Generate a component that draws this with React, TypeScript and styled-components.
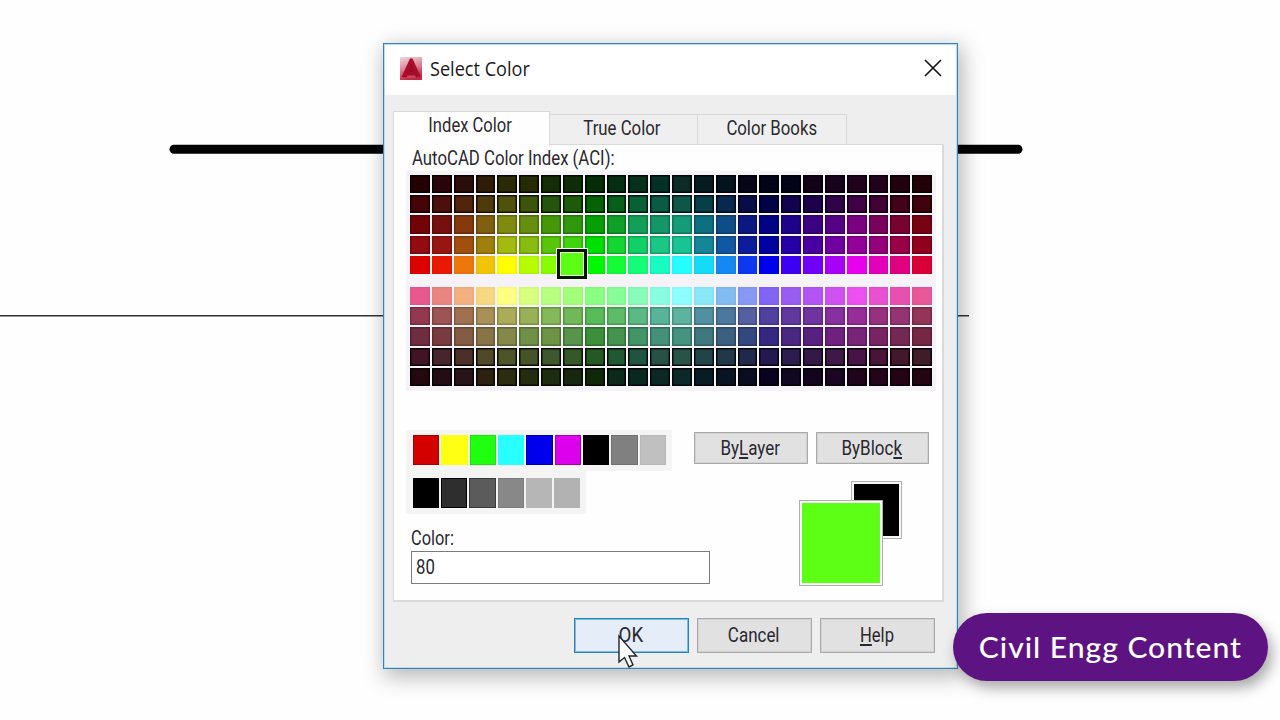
import React from "react";
import styled, { createGlobalStyle } from "styled-components";

const GlobalStyle = createGlobalStyle`
  *, *::before, *::after { box-sizing: border-box; }
  body { margin: 0; background: #fff; overflow: hidden; }
`;

const Desktop = styled.main`
  position: relative;
  width: 1280px;
  height: 720px;
  overflow: hidden;
  background: #fefefe;
  font-family: Roboto, "Liberation Sans", sans-serif;
  color: #2c2930;
`;

const Drawing = styled.svg`
  position: absolute;
  inset: 0;
`;

const Dialog = styled.section`
  position: absolute;
  left: 383px;
  top: 43px;
  width: 575px;
  height: 626px;
  display: flex;
  flex-direction: column;
  background: #eeeeee;
  border: 1px solid #3c82b4;
  box-shadow: inset 0 0 0 1px #b5dcf0, 3px 6px 20px 2px rgba(0, 0, 0, 0.28);
`;

const TitleBar = styled.header`
  display: flex;
  align-items: center;
  height: 50px;
  margin: 1px 1px 0;
  padding: 0 14px 3px 15px;
  background: #fff;
`;

const Text = styled.span<{ $scale: number; $origin?: string }>`
  display: inline-block;
  white-space: nowrap;
  transform: scaleX(${(p) => p.$scale});
  transform-origin: ${(p) => p.$origin ?? "center"};
`;

const Title = styled.h1`
  flex: 1;
  margin: 0 0 0 7px;
  font: 400 20px/28px "Open Sans", "Noto Sans", sans-serif;
  color: #1c1a20;
`;

const CloseIcon = styled.svg`
  margin-bottom: 1px;
`;

const TabStrip = styled.nav`
  display: flex;
  align-items: flex-end;
  height: 34px;
  margin: 15px 0 0 9px;
`;

const Tab = styled.div<{ $active?: boolean; $width: number; $nudge?: number }>`
  position: relative;
  z-index: ${(p) => (p.$active ? 1 : 0)};
  display: flex;
  justify-content: center;
  width: ${(p) => p.$width}px;
  height: ${(p) => (p.$active ? 35 : 30)}px;
  margin-bottom: ${(p) => (p.$active ? -2 : 0)}px;
  padding-top: 1px;
  padding-right: ${(p) => p.$nudge ?? 2}px;
  font-size: 19.5px;
  line-height: 26px;
  background: ${(p) => (p.$active ? "#fefefe" : "#efefef")};
  border: 1px solid #d9d9d9;
  border-bottom: 0;
  border-left-width: ${(p) => (p.$active ? 1 : 0)}px;
`;

const Panel = styled.div`
  display: flex;
  flex-direction: column;
  width: 551px;
  height: 458px;
  margin-left: 9px;
  padding: 0 6px 0 12px;
  background: #fefefe;
  border: 1px solid #dadada;
  border-right-width: 2px;
  border-bottom-width: 2px;
`;

const Caption = styled.div`
  height: 26px;
  padding-left: 6px;
  font-size: 19.5px;
  line-height: 27px;
`;

const Palettes = styled.div`
  display: flex;
  flex-direction: column;
  gap: 13px;
  width: 530px;
  height: 220px;
  padding: 4px 4px 4px;
  background: #f5f3f7;
`;

const Palette = styled.div`
  display: grid;
  grid-template-columns: repeat(24, 1fr);
  grid-template-rows: repeat(5, 1fr);
  gap: 2px;
  height: 99px;
`;

const Cell = styled.div<{ $color: string; $edge: string }>`
  position: relative;
  background: ${(p) => p.$color};
  box-shadow: inset 0 0 0 1.5px ${(p) => p.$edge};
`;

const Selection = styled.div`
  position: absolute;
  z-index: 2;
  left: -6px;
  top: -7px;
  width: 30px;
  height: 30px;
  border: 3px solid #0a120a;
  background: #5cff14;
  box-shadow: 0 0 0 1px #f2fff0, inset 0 0 0 1px #e4ffd8;
`;

const Middle = styled.div`
  display: flex;
  justify-content: space-between;
  height: 84px;
  margin-top: 39px;
  padding-right: 7px;
`;

const SwatchRow = styled.div<{ $wide?: boolean }>`
  display: flex;
  gap: 2px;
  width: ${(p) => (p.$wide ? 266 : 180)}px;
  height: ${(p) => (p.$wide ? 41 : 43)}px;
  padding: ${(p) => (p.$wide ? 5 : 7)}px 6px 5px 7px;
  background: #f4f4f4;
`;

const Swatch = styled.div<{ $color: string; $edge?: string }>`
  flex: 1;
  height: 30px;
  background: ${(p) => p.$color};
  border: 1px solid ${(p) => p.$edge ?? p.$color};
`;

const LayerButtons = styled.div`
  display: flex;
  gap: 8px;
  padding-top: 2px;
`;

const Button = styled.button<{ $w: number; $h: number; $primary?: boolean }>`
  display: flex;
  align-items: center;
  justify-content: center;
  width: ${(p) => p.$w}px;
  height: ${(p) => p.$h}px;
  padding: 1px 1px 0 0;
  font: 400 19.5px/26px Roboto, "Liberation Sans", sans-serif;
  color: #2a2730;
  background: ${(p) => (p.$primary ? "#e4edf8" : "#e1e1e1")};
  border: 1px solid ${(p) => (p.$primary ? "#2484c4" : "#a9a9a9")};
  box-shadow: inset 0 0 0 1px ${(p) => (p.$primary ? "#7dbbe2" : "#d2d2d2")};
  border-radius: 0;

  u { text-underline-offset: 2px; text-decoration-thickness: 1.5px; }
`;

const Lower = styled.div`
  display: flex;
  justify-content: space-between;
  align-items: flex-start;
  padding-right: 34px;
`;

const Field = styled.label`
  display: flex;
  flex-direction: column;
  padding: 12px 0 0 5px;
  font-size: 19.5px;
  line-height: 25px;
`;

const Value = styled.div`
  width: 299px;
  height: 33px;
  padding: 1px 0 0 4px;
  line-height: 29px;
  background: #fff;
  border: 1.5px solid #7c7c7c;
`;

const Preview = styled.div`
  display: grid;
  width: 103px;
  height: 105px;
  margin-top: -33px;
`;

const Chip = styled.div<{ $color: string; $front?: boolean }>`
  grid-area: 1 / 1;
  align-self: ${(p) => (p.$front ? "end" : "start")};
  justify-self: ${(p) => (p.$front ? "start" : "end")};
  width: ${(p) => (p.$front ? 84 : 51)}px;
  height: ${(p) => (p.$front ? 86 : 58)}px;
  padding: 2px;
  background: ${(p) => p.$color};
  background-clip: content-box;
  border: 1px solid #b0b0b0;
  box-shadow: inset 0 0 0 2px #f7f7f7;
`;

const Footer = styled.footer`
  display: flex;
  justify-content: flex-end;
  gap: 8px;
  padding: 16px 22px 0 0;
`;

const Badge = styled.div`
  position: absolute;
  left: 953px;
  top: 613px;
  width: 315px;
  height: 68px;
  display: flex;
  align-items: center;
  justify-content: center;
  border-radius: 34px;
  background: #5e1382;
  color: #fff;
  font: 500 28px/36px Lato, sans-serif;
  letter-spacing: 0.9px;
  box-shadow: 4px 7px 14px rgba(0, 0, 0, 0.34);
`;

const Pointer = styled.svg`
  position: absolute;
  left: 617px;
  top: 633px;
`;

const upper = [
  "240204 2a0408 2b0d0a 2e1c08 2a2a06 252b06 142c06 0f2c08 052d06 042f12 04301c 063026 0a2b25 071c20 04141f 060618 020218 020218 120218 16021c 20021c 22021a 22020f 220208",
  "450408 4b0f0d 52240c 4e3a0c 4f520d 3c540b 25550a 1e5a0c 056205 075f1a 086034 0a5a44 0d5648 073e48 082850 080c48 020248 120250 1c024a 300248 400246 400234 420218 40020c",
  "720408 75100f 85390c 806010 7f8a10 668f10 449808 30980c 06a006 10a026 12a058 149668 129c78 0c7080 0e4e88 0a1880 020284 1e028a 3c0284 560284 780280 78025c 780230 760212",
  "920a12 981612 a0500c a0800c a4ba10 88bc10 58c608 40d40c 00e000 14d630 12d068 18c884 18c494 148698 1058a4 0c1c9c 0000a0 2400a6 4800a0 7000a0 94009a 94007c 980048 920020",
  "dc0000 e81a04 ec780c f2c408 ffff00 b8fc04 88fc00 5cff14 00f800 14fc38 14fc78 18fcc4 28ffff 14dcf8 1488f4 0c38f4 0000ec 3c00f4 7000f8 a800f8 e800ec e400b8 e00080 d80038",
];

const lower = [
  "e8588c ea8480 f2b080 f6d880 ffff80 d8ff80 b8ff80 a4ff78 88ff80 88fc98 88fcb8 88ffe0 8cffff 88e8f8 80bcf0 8498f4 8064f4 985cf0 b054f4 d050f0 ec50f0 e850d0 e850b0 e85898",
  "943850 9c5454 a07050 a89058 acac58 98b058 84b858 70b858 58bc58 5cbc68 5cb884 58b498 5cb4a0 5090a0 4c78a0 5460a0 5040a0 6038a0 7034a0 8830a0 982c98 983080 943470 943458",
  "702c40 783c40 845c44 887448 848848 709048 6c9444 58944c 3c903c 449450 449468 449078 449480 407880 3c6080 344880 342880 482880 582080 702080 782478 782464 742854 742844",
  "401424 48242c 4c3028 504828 4c5428 445428 3c582c 345828 245824 205834 205440 285044 285448 204448 203848 20284c 241850 2c1c50 341848 401848 481448 481438 44182c 401c28",
  "240810 240c14 281418 2c2010 2c2c10 242c10 1c2c10 182810 102808 0c2818 082820 0c2824 0c2828 081c24 081424 0c0c20 080420 100820 140420 1c0424 20041c 240418 240414 240410",
];

function shade(hex: string, factor: number) {
  const parts = [0, 2, 4].map((i) => Math.round(parseInt(hex.slice(i, i + 2), 16) * factor));
  return `rgb(${parts.join(",")})`;
}

function ColorGrid({ rows, edges, selected }: { rows: string[]; edges: number[]; selected?: number }) {
  return (
    <Palette>
      {rows.flatMap((row, r) =>
        row.split(" ").map((hex, c) => (
          <Cell key={`${r}-${c}`} $color={`#${hex}`} $edge={shade(hex, edges[r])}>
            {selected === r * 24 + c && <Selection />}
          </Cell>
        ))
      )}
    </Palette>
  );
}

export default function App() {
  return (
    <Desktop>
      <GlobalStyle />
      <Drawing width="1280" height="720">
        <path d="M174 149.3H1018" stroke="#000" strokeWidth="9" strokeLinecap="round" />
        <path d="M0 315.8H969" stroke="#333" strokeWidth="1.5" />
      </Drawing>

      <Dialog>
        <TitleBar>
          <svg width="23" height="23" viewBox="0 0 23 23">
            <defs>
              <linearGradient id="logo" x1="0" y1="0" x2="0.3" y2="1">
                <stop offset="0" stopColor="#f2d8df" />
                <stop offset="0.55" stopColor="#d98496" />
                <stop offset="1" stopColor="#c22846" />
              </linearGradient>
            </defs>
            <rect width="22" height="23" fill="url(#logo)" />
            <path d="M10 1.500h2.500L20.500 19l-4 1.500H6L1.500 20z" fill="#a80d2c" />
            <path d="M11 6 8.500 15h6z" fill="#980b28" />
            <path d="M7.500 18.500h7.500l1 2.500h-9.500z" fill="#cc4560" />
          </svg>
          <Title><Text $scale={0.905} $origin="left">Select Color</Text></Title>
          <CloseIcon width="18" height="18" viewBox="0 0 18 18">
            <path d="M1 1 17 17M17 1 1 17" stroke="#161616" strokeWidth="1.7" fill="none" />
          </CloseIcon>
        </TitleBar>

        <TabStrip>
          <Tab $active $width={157}><Text $scale={0.85}>Index Color</Text></Tab>
          <Tab $width={148} $nudge={3}><Text $scale={0.86}>True Color</Text></Tab>
          <Tab $width={149} $nudge={0}><Text $scale={0.86}>Color Books</Text></Tab>
        </TabStrip>

        <Panel>
          <Caption><Text $scale={0.86} $origin="left">AutoCAD Color Index (ACI):</Text></Caption>
          <Palettes>
            <ColorGrid rows={upper} edges={[0.15, 0.25, 0.75, 0.8, 0.96]} selected={4 * 24 + 7} />
            <ColorGrid rows={lower} edges={[0.97, 0.8, 0.75, 0.15, 0.15]} />
          </Palettes>
          <Middle>
            <div>
              <SwatchRow $wide>
                <Swatch $color="#d40000" $edge="#a80000" />
                <Swatch $color="#ffff14" />
                <Swatch $color="#20ff10" $edge="#18e808" />
                <Swatch $color="#28ffff" />
                <Swatch $color="#0000ec" $edge="#0000a8" />
                <Swatch $color="#dc00ec" $edge="#a800b4" />
                <Swatch $color="#000" />
                <Swatch $color="#808080" $edge="#707070" />
                <Swatch $color="#c0c0c0" $edge="#b8b8b8" />
              </SwatchRow>
              <SwatchRow>
                <Swatch $color="#000" />
                <Swatch $color="#2e2e2e" $edge="#000" />
                <Swatch $color="#5b5b5b" $edge="#383838" />
                <Swatch $color="#888" $edge="#7c7c7c" />
                <Swatch $color="#b6b6b6" />
                <Swatch $color="#b2b2b2" />
              </SwatchRow>
            </div>
            <LayerButtons>
              <Button $w={114} $h={32}><Text $scale={0.87}>By<u>L</u>ayer</Text></Button>
              <Button $w={113} $h={32}><Text $scale={0.87}>ByBloc<u>k</u></Text></Button>
            </LayerButtons>
          </Middle>
          <Lower>
            <Field>
              <Text $scale={0.84} $origin="left">Color:</Text>
              <Value><Text $scale={0.86} $origin="left">80</Text></Value>
            </Field>
            <Preview>
              <Chip $color="#000" />
              <Chip $color="#5dff14" $front />
            </Preview>
          </Lower>
        </Panel>

        <Footer>
          <Button $w={115} $h={35} $primary><Text $scale={0.96}>OK</Text></Button>
          <Button $w={115} $h={35}><Text $scale={0.87}>Cancel</Text></Button>
          <Button $w={115} $h={35}><Text $scale={0.85}><u>H</u>elp</Text></Button>
        </Footer>
      </Dialog>

      <Pointer width="22" height="36" viewBox="0 0 22 36">
        <path d="M2 3v26l5.500-4.500 4.500 9.500 4-2-4-9h7.500z" fill="#fff" stroke="#24202c" strokeWidth="1.4" />
      </Pointer>

      <Badge><Text $scale={1.075}>Civil Engg Content</Text></Badge>
    </Desktop>
  );
}
